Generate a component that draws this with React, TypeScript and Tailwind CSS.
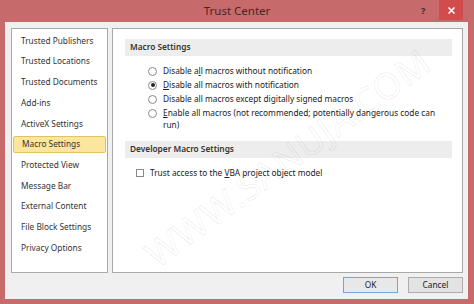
import React from "react";

const font = { fontFamily: '"Noto Sans", "Open Sans", Arial, sans-serif' };

const items = [
  "Trusted Publishers",
  "Trusted Locations",
  "Trusted Documents",
  "Add-ins",
  "ActiveX Settings",
  "Macro Settings",
  "Protected View",
  "Message Bar",
  "External Content",
  "File Block Settings",
  "Privacy Options",
];

function Radio({ checked }: { checked?: boolean }) {
  return (
    <span className="w-[9px] h-[9px] rounded-full border border-[#8a8a8a] bg-white flex items-center justify-center shrink-0">
      {checked && <span className="w-[4px] h-[4px] rounded-full bg-[#222]" />}
    </span>
  );
}

export default function App() {
  return (
    <div className="w-[474px] h-[304px] bg-[#c76a6b] flex flex-col overflow-hidden relative" style={font}>
      <div className="h-[22px] relative flex items-center justify-center shrink-0">
        <span className="text-[11.5px] text-[#4a2526]">Trust Center</span>
        <span className="absolute left-[421px] top-[4px] text-[9px] font-bold text-[#4a2526]">?</span>
        <div className="absolute left-[439px] top-0 w-[24px] h-[20px] bg-[#d24c4d] flex items-center justify-center">
          <svg width="7" height="7" viewBox="0 0 7 7">
            <path d="M0.5 0.5 L6.5 6.5 M6.5 0.5 L0.5 6.5" stroke="#fff" strokeWidth="1.5" />
          </svg>
        </div>
      </div>
      <div className="ml-[5px] mr-[6px] h-[277px] bg-[#f0f0f0] pt-[6px] pl-[6px] pr-[5px] flex flex-col">
        <div className="flex gap-[4px] h-[245px]">
          <div className="w-[97px] h-full border border-[#a9a9a9] bg-white flex flex-col gap-[3.7px] pt-[3.5px]">
            {items.map((t) => (
              <div
                key={t}
                className={
                  "h-[17px] mx-[1px] pl-[8px] flex items-center text-[8.3px] text-[#333] whitespace-nowrap " +
                  (t === "Macro Settings" ? "bg-[#fce59c] border border-[#e3c266] rounded-[2px] pl-[7px]" : "")
                }
              >
                {t}
              </div>
            ))}
          </div>
          <div className="flex-1 h-full border border-[#a9a9a9] bg-white flex flex-col">
            <div className="mt-[10px] ml-[12px] mr-[10px] h-[17px] bg-[#ededed] flex items-center pl-[5px] text-[8.3px] font-semibold text-[#333]">
              Macro Settings
            </div>
            <div className="mt-[8px] pl-[35px] flex flex-col text-[8.3px] text-[#222]">
              <div className="h-[14px] flex items-center gap-[6px]">
                <Radio />
                <span>Disable a<u>l</u>l macros without notification</span>
              </div>
              <div className="h-[14px] flex items-center gap-[6px]">
                <Radio checked />
                <span><u>D</u>isable all macros with notification</span>
              </div>
              <div className="h-[14px] flex items-center gap-[6px]">
                <Radio />
                <span>Disable all macros except digitally signed macros</span>
              </div>
              <div className="flex items-start gap-[6px]">
                <span className="mt-[2.5px]"><Radio /></span>
                <span className="leading-[12px] pt-[1px]">
                  <u>E</u>nable all macros (not recommended; potentially dangerous code can
                  <br />
                  run)
                </span>
              </div>
            </div>
            <div className="mt-[10px] ml-[12px] mr-[10px] h-[17px] bg-[#ededed] flex items-center pl-[5px] text-[8.3px] font-semibold text-[#333]">
              Developer Macro Settings
            </div>
            <div className="mt-[9px] pl-[23px] flex items-center gap-[6px] text-[8.3px] text-[#222]">
              <span className="w-[8px] h-[8px] border border-[#8a8a8a] bg-white shrink-0" />
              <span>Trust access to the <u>V</u>BA project object model</span>
            </div>
          </div>
        </div>
        <div className="mt-[4px] flex justify-end gap-[10px]">
          <div className="w-[55px] h-[16px] border border-[#6fa7dc] bg-[#e8e8e8] flex items-center justify-center text-[8.3px] text-[#222]">
            OK
          </div>
          <div className="w-[55px] h-[16px] border border-[#adadad] bg-[#e3e3e3] flex items-center justify-center text-[8.3px] text-[#222]">
            Cancel
          </div>
        </div>
      </div>
      <div
        className="absolute left-[288px] top-[158px] text-[36px] leading-[40px] text-transparent pointer-events-none whitespace-nowrap tracking-[1px]"
        style={{ transform: "translate(-50%, -50%) rotate(-36deg)", WebkitTextStroke: "1px rgba(0,0,0,0.07)" }}
      >
        WWW.SANUJA.COM
      </div>
    </div>
  );
}
